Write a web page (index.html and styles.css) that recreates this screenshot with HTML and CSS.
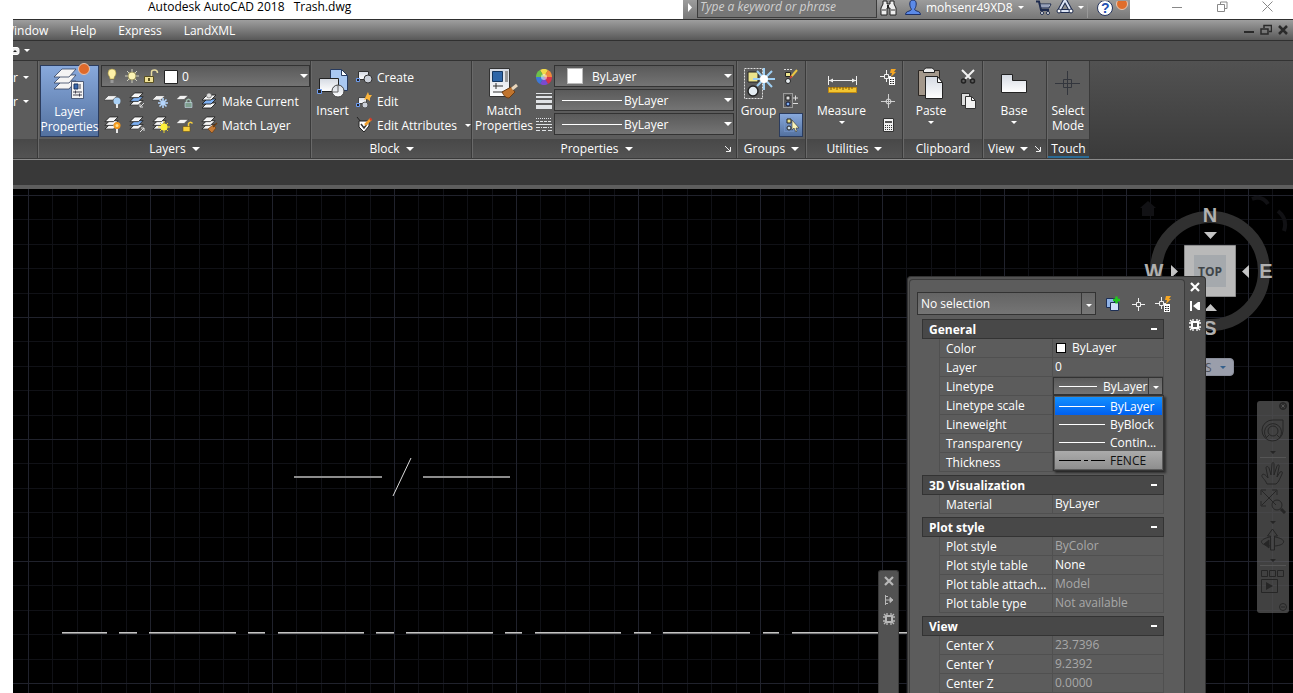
FILE: index.html
```html
<!DOCTYPE html>
<html lang="en">
  <head>
    <meta charset="UTF-8" />
    <meta name="viewport" content="width=device-width, initial-scale=1.0" />
    <title>Autodesk AutoCAD 2018 - Trash.dwg</title>
    <link rel="stylesheet" href="styles.css" />
  </head>
  <body>
    <!-- Shared icon shapes -->
    <svg class="defs" aria-hidden="true">
      <defs>
        <linearGradient id="silver" x1="0" y1="0" x2="0" y2="1">
          <stop offset="0" stop-color="#d4d9e2" />
          <stop offset="1" stop-color="#ffffff" />
        </linearGradient>
        <symbol id="sheet" viewBox="0 0 16 16">
          <path d="M5 3h10l-5 5H0z" fill="#f2f2f2" stroke="#333" stroke-width=".6" />
        </symbol>
        <symbol id="sheets" viewBox="0 0 16 16">
          <g fill="#f6f6f6" stroke="#222" stroke-width=".9">
            <path d="M6 9h9l-5 5H1z" />
            <path d="M6 5h9l-5 5H1z" />
            <path d="M6 1h9l-5 5H1z" />
          </g>
        </symbol>
        <symbol id="sheets-blue" viewBox="0 0 16 16">
          <g fill="#f6f6f6" stroke="#222" stroke-width=".9">
            <path d="M6 9h9l-5 5H1z" />
            <path d="M6 5h9l-5 5H1z" fill="#7db0f2" />
            <path d="M6 1h9l-5 5H1z" />
          </g>
        </symbol>
        <symbol id="gear" viewBox="0 0 12 12">
          <path d="M3 3h6v6H3z" fill="none" stroke="currentColor" stroke-width="2" />
          <path d="M4 0v3M8 0v3M4 9v3M8 9v3M0 4h3M0 8h3M9 4h3M9 8h3M1 1l2 2M9 9l2 2M11 1L9 3M3 9l-2 2" stroke="currentColor" stroke-width="1.300" />
        </symbol>
        <symbol id="close" viewBox="0 0 12 12">
          <path d="M2 2l8 8M10 2l-8 8" stroke="currentColor" stroke-width="2.200" />
        </symbol>
        <symbol id="crosshair" viewBox="0 0 16 16">
          <path d="M8.500 2v4M8.500 11v4M2 8.500h4M11 8.500h4M6.500 6.500h4v4h-4z" fill="none" stroke="#f0f0f0" />
        </symbol>
        <symbol id="quick-select" viewBox="0 0 16 16">
          <path d="M6.500 1v4M6.500 9v4M0 7.500h4M8 7.500h3M4.500 5.500h4v4h-4z" fill="none" stroke="#f0f0f0" />
          <path d="M11 0h5l-2 3h2l-5 5 1-4h-2z" fill="#f5a623" />
          <path d="M9 8h6v8H9z" fill="#fff" />
          <path d="M10 10.500h1.500M12.500 10.500h1.500M10 12.500h1.500M12.500 12.500h1.500M10 14.500h1.500M12.500 14.500h1.500" stroke="#222" />
        </symbol>
      </defs>
    </svg>

    <header class="titlebar">
      <h1 class="title">Autodesk AutoCAD 2018 <span>Trash.dwg</span></h1>
      <div class="infocenter">
        <button class="search-toggle" aria-label="Collapse search">
          <svg width="6" height="9" viewBox="0 0 6 9"><path d="M1 0v9l4-4.500z" fill="#fff" /></svg>
        </button>
        <input class="search" type="text" placeholder="Type a keyword or phrase" aria-label="Search help" />
        <button class="info-btn" aria-label="Search">
          <svg width="18" height="16" viewBox="0 0 18 16">
            <path d="M3 1h4v3h3V1h4v3l2 4v7h-6V8H7v7H1V8l2-4z" fill="#eee" stroke="#222" />
            <path d="M2 10h4M11 10h4" stroke="#333" />
            <path d="M8 5v3" stroke="#222" stroke-width="2" />
          </svg>
        </button>
        <button class="info-btn user">
          <svg width="16" height="16" viewBox="0 0 16 16">
            <path d="M0.500 14.500c0-3 3-3 5-4 1-.5 1-1.500 0-3C4.500 5 4 0 8 0s3.500 5 2.500 7.500c-1 1.500-1 2.500 0 3 2 1 5 1 5 4z" fill="#5b8ae8" stroke="#1c2f66" />
          </svg>
          mohsenr49XD8<i class="caret small"></i>
        </button>
        <button class="info-btn" aria-label="App Store">
          <svg width="17" height="16" viewBox="0 0 17 16">
            <path d="M1 1.500h3l2 8.500h8" fill="none" stroke="#1d2a4d" stroke-width="2" />
            <path d="M5 4h11l-2 4H6z" fill="#dce4f4" stroke="#1d2a4d" />
            <path d="M7 5v3M9 5v3M11 5v3M13 5v3" stroke="#1d2a4d" stroke-width=".7" />
            <circle cx="7" cy="13" r="1.500" fill="#fff" stroke="#1d2a4d" />
            <circle cx="13" cy="13" r="1.500" fill="#fff" stroke="#1d2a4d" />
          </svg>
        </button>
        <button class="info-btn connect" aria-label="Connect">
          <svg width="18" height="16" viewBox="0 0 18 16">
            <path d="M9 0L3 11M9 0l6 11M3 11h12" stroke="#1d2a4d" stroke-width="4" fill="none" />
            <path d="M9 0L3 11M9 0l6 11M3 11h12" stroke="#dce4f4" stroke-width="2" fill="none" />
            <circle cx="3" cy="11" r="2" fill="#fff" stroke="#1d2a4d" />
            <circle cx="15" cy="11" r="2" fill="#fff" stroke="#1d2a4d" />
          </svg>
          <i class="caret small"></i>
        </button>
        <button class="info-btn help" aria-label="Help">
          <svg width="32" height="16" viewBox="0 0 32 16">
            <circle cx="8" cy="7" r="7.500" fill="#fff" stroke="#25355f" />
            <text x="4" y="12" class="help-mark">?</text>
            <circle cx="25" cy="3" r="5.500" fill="#df6d2c" stroke="#e8c8b4" />
          </svg>
        </button>
      </div>
      <div class="window-controls">
        <button aria-label="Minimize"><svg width="11" height="11"><path d="M0 6.500h10" stroke="#888" /></svg></button>
        <button aria-label="Restore"><svg width="11" height="11"><path d="M.5 3.500h7v7h-7zM3.500 3V1h6.500v6.500H8" fill="none" stroke="#888" /></svg></button>
        <button aria-label="Close"><svg width="11" height="11"><path d="M.5 .5l10 10M10.500 .5l-10 10" stroke="#888" /></svg></button>
      </div>
    </header>

    <nav class="menubar">
      <a href="#">Window</a>
      <a href="#">Help</a>
      <a href="#">Express</a>
      <a href="#">LandXML</a>
      <div class="doc-controls">
        <button aria-label="Minimize drawing"><svg width="12" height="12"><path d="M1 8h10" stroke="#2a2a2a" stroke-width="2" /></svg></button>
        <button aria-label="Restore drawing"><svg width="12" height="12"><path d="M1 5h7v5H1zM4 4V1.500h7.500v6H9" fill="none" stroke="#2a2a2a" stroke-width="1.500" /></svg></button>
        <button aria-label="Close drawing"><svg width="12" height="12"><path d="M2 2l8 8M10 2l-8 8" stroke="#2a2a2a" stroke-width="2.500" /></svg></button>
      </div>
    </nav>

    <div class="tabbar">
      <button aria-label="Ribbon display options">
        <svg width="7" height="8"><path d="M0 .5h4q2 0 2 2v3q0 2-2 2H0" fill="#eee" stroke="#fff" /><path d="M0 5l2-2 2 2z" fill="#222" /></svg>
        <i class="caret small"></i>
      </button>
    </div>

    <div class="ribbon">
      <section class="panel panel-modify">
        <div class="panel-body rows">
          <button class="row">r <i class="caret small"></i></button>
          <button class="row">er <i class="caret small"></i></button>
        </div>
        <h2></h2>
      </section>

      <section class="panel panel-layers">
        <div class="panel-body">
          <button class="big active layer-props">
            <svg width="34" height="34" viewBox="0 0 34 34">
              <g fill="#f4f4f4" stroke="#33415f" stroke-width=".8">
                <path d="M9 14h14l-7 8H1z" /><path d="M9 8h14l-7 8H1z" /><path d="M9 2h14l-7 8H1z" />
                <path d="M18.500 14.500h12v17h-12z" />
              </g>
              <path d="M21 17h4v5h-4z" fill="#3767ad" stroke="#1c355e" />
              <path d="M27 17v5M20 25h9M20 28h9" stroke="#445" />
              <path d="M22.500 23.500v3M26.500 26.500v3" stroke="#445" />
            </svg>
            <span>Layer<br />Properties</span>
            <i class="dot"></i>
          </button>
          <div class="rows layer-rows">
            <div class="combo layer-combo">
              <select aria-label="Layer"><option>0</option></select>
              <span class="sample">
                <svg width="72" height="16" viewBox="0 0 72 16">
                  <path d="M6 1a4 4 0 0 1 4 4c0 3-2 3-2 6H4c0-3-2-3-2-6a4 4 0 0 1 4-4z" fill="#fdf0a8" stroke="#a8963c" stroke-width=".6" />
                  <path d="M4.500 12h3v3h-3z" fill="#9a9a9a" />
                  <path d="M26 1v14M19 8h14M21 3l10 10M31 3L21 13" stroke="#d0d0c0" />
                  <circle cx="26" cy="8" r="4" fill="#fbf3b4" stroke="#9a9360" />
                  <path d="M45.500 8V4q0-2 3-2t3 3" fill="none" stroke="#e8dca0" stroke-width="1.500" />
                  <path d="M38.500 8.500h9v6h-9z" fill="#f0e296" stroke="#5a5020" />
                  <path d="M43 10v3" stroke="#5a5020" stroke-width="2" />
                  <path d="M58.500 2.500h13v13h-13z" fill="#fff" stroke="#222" />
                </svg>
              </span>
            </div>
            <div class="row icons">
              <button aria-label="Off"><svg width="18" height="18" viewBox="0 0 18 18"><use href="#sheet" width="14" height="14" y="1" /><circle cx="13" cy="9" r="3.500" fill="#a9d0f5" /><path d="M12 12h2v4h-2z" fill="#e8e8e8" /></svg></button>
              <button aria-label="Isolate"><svg width="18" height="18" viewBox="0 0 18 18"><use href="#sheets-blue" width="15" height="15" x="1" /><path d="M16 11l-4 4M12 12v3h3" stroke="#ddd" fill="none" /></svg></button>
              <button aria-label="Freeze"><svg width="18" height="18" viewBox="0 0 18 18"><use href="#sheet" width="14" height="14" y="1" /><path d="M11 6v10M6 11h10M7.500 7.500l7 7M14.500 7.500l-7 7" stroke="#b5d5fb" stroke-width="1.600" /></svg></button>
              <button aria-label="Lock"><svg width="18" height="18" viewBox="0 0 18 18"><use href="#sheet" width="13" height="13" y="1" /><path d="M10.500 11V8.500q2-2.500 4 0V11" fill="none" stroke="#9ab8a8" stroke-width="1.500" /><path d="M9 10.500h7v5H9z" fill="#7f9f8f" stroke="#cde" stroke-width=".6" /></svg></button>
              <button class="text"><svg width="18" height="18" viewBox="0 0 18 18"><use href="#sheets-blue" width="16" height="16" x="1" y="2" /><circle cx="9" cy="3.500" r="2.500" fill="#ddd" stroke="#555" stroke-width=".6" /></svg>Make Current</button>
            </div>
            <div class="row icons">
              <button aria-label="Turn all layers on"><svg width="18" height="18" viewBox="0 0 18 18"><use href="#sheets" width="15" height="15" /><circle cx="13" cy="9.500" r="3.500" fill="#f79a1e" /><circle cx="13" cy="9.500" r="1.500" fill="#fde08a" /><path d="M12 13h2v4h-2z" fill="#e8e8e8" /></svg></button>
              <button aria-label="Unisolate"><svg width="18" height="18" viewBox="0 0 18 18"><use href="#sheets-blue" width="15" height="15" x="1" /><path d="M12 16l4-4M13 12h3v3" stroke="#ddd" fill="none" /></svg></button>
              <button aria-label="Thaw all layers"><svg width="18" height="18" viewBox="0 0 18 18"><use href="#sheets" width="15" height="15" /><path d="M12 5v12M6 11h12M8 7l8 8M16 7l-8 8" stroke="#e8cf2d" /><circle cx="12" cy="11" r="3.500" fill="#fdf03a" /></svg></button>
              <button aria-label="Unlock"><svg width="18" height="18" viewBox="0 0 18 18"><use href="#sheet" width="13" height="13" y="1" /><path d="M12.500 11V7.500q2-2.500 4 0" fill="none" stroke="#f6cf3c" stroke-width="1.500" /><path d="M7 10.500h7v5H7z" fill="#f6cf3c" stroke="#6d5410" stroke-width=".6" /></svg></button>
              <button class="text"><svg width="18" height="18" viewBox="0 0 18 18"><use href="#sheets" width="15" height="15" x="1" /><path d="M8 13l5-4 3 3-4 5z" fill="#c77b35" stroke="#6b3c12" stroke-width=".7" /><path d="M13 11l4-4" stroke="#6b3c12" stroke-width="1.500" /></svg>Match Layer</button>
            </div>
          </div>
        </div>
        <h2>Layers <i class="caret"></i></h2>
      </section>

      <section class="panel panel-block">
        <div class="panel-body">
          <button class="big insert">
            <svg width="34" height="32" viewBox="0 0 34 32">
              <path d="M14.500 2.500h11l6 6v15h-17z" fill="#a9c8f2" stroke="#273a5e" />
              <path d="M25.500 2.500v6h6z" fill="#fff" stroke="#273a5e" />
              <path d="M3.500 11.500h19v13h-19z" fill="url(#silver)" stroke="#222" />
              <circle cx="22" cy="24" r="6" fill="url(#silver)" stroke="#444" />
              <path d="M22 18v7h-6" fill="none" stroke="#666" />
              <path d="M1.500 22.500h4v4h-4z" fill="#222" stroke="#6f9df0" />
            </svg>
            <span>Insert</span>
          </button>
          <div class="rows block-rows">
            <button class="row"><svg width="18" height="18" viewBox="0 0 18 18"><path d="M3.500 3.500h10v8h-10z" fill="url(#silver)" stroke="#333" /><circle cx="13" cy="11" r="4" fill="#ccd1da" stroke="#333" /><path d="M1.500 10.500h3v3h-3z" fill="#222" stroke="#6f9df0" /></svg>Create</button>
            <button class="row"><svg width="18" height="18" viewBox="0 0 18 18"><path d="M3.500 5.500h8v6h-8z" fill="url(#silver)" stroke="#444" /><circle cx="10" cy="13" r="3" fill="#ccd1da" stroke="#555" /><path d="M1.500 11.500h3v3h-3z" fill="#222" stroke="#6f9df0" /><path d="M13 0l1 3 3 0-2 3 0 3-3-2-3 1 2-4z" fill="#fbb43a" /></svg>Edit</button>
            <button class="row"><svg width="18" height="18" viewBox="0 0 18 18"><path d="M2 1l4 5" stroke="#222" /><path d="M4 5h10v5l-5 6-5-5z" fill="#fff" stroke="#222" /><path d="M6 8l3 4 3-4" stroke="#333" fill="none" stroke-width="1.500" /><path d="M10 9l6-6" stroke="#f2a02c" stroke-width="2.500" /><path d="M15 4l1.500-1.500" stroke="#d23b2a" stroke-width="2.500" /></svg>Edit Attributes <i class="caret small"></i></button>
          </div>
        </div>
        <h2>Block <i class="caret"></i></h2>
      </section>

      <section class="panel panel-props">
        <div class="panel-body">
          <button class="big match">
            <svg width="34" height="32" viewBox="0 0 34 32">
              <path d="M2.500 1.500h20v28h-20z" fill="url(#silver)" stroke="#333" />
              <path d="M5.500 4.500h10v10h-10z" fill="#2f66a8" stroke="#15365f" />
              <path d="M18 4h3v11h-3z" fill="#999" />
              <path d="M6 19h10M9 16v6M6 25h12" stroke="#333" />
              <path d="M15 25l9-5 4 5-6 6c-3 0-5-2-7-6z" fill="#c0742e" stroke="#6b3c12" />
              <path d="M25 22l5-4" stroke="#e8d6bc" stroke-width="3" />
            </svg>
            <span>Match<br />Properties</span>
          </button>
          <div class="rows prop-icons">
            <button class="row" aria-label="Object color">
              <svg width="16" height="16" viewBox="0 0 16 16">
                <path d="M8 8L4 1a8 8 0 0 1 8 0z" fill="#f2d94a" />
                <path d="M8 8l4-7a8 8 0 0 1 4 7z" fill="#f08a3c" />
                <path d="M8 8h8a8 8 0 0 1-4 7z" fill="#d8344a" />
                <path d="M8 8l4 7a8 8 0 0 1-8 0z" fill="#7a4bd0" />
                <path d="M8 8l-4 7a8 8 0 0 1-4-7z" fill="#3c78d8" />
                <path d="M8 8H0a8 8 0 0 1 4-7z" fill="#6cc04a" />
                <circle cx="8" cy="8" r="3" fill="#fff" opacity=".5" />
              </svg>
            </button>
            <button class="row" aria-label="Lineweight"><svg width="16" height="16"><path d="M0 0h16v1H0zM0 3h16v2H0zM0 7h16v3H0zM0 12h16v4H0z" fill="#e0e3e6" /></svg></button>
            <button class="row" aria-label="Linetype"><svg width="16" height="16"><g stroke="#e0e3e6"><path d="M0 1.500h16" stroke-dasharray="1 1" /><path d="M0 4.500h16" stroke-dasharray="3 1" /><path d="M0 7.500h16" /><path d="M0 10.500h16" stroke-dasharray="4 1 1 1" /><path d="M0 13.500h16" stroke-dasharray="4 2" /></g></svg></button>
          </div>
          <div class="rows prop-combos">
            <div class="combo color-combo">
              <select aria-label="Object color"><option>ByLayer</option></select>
              <span class="sample"><i class="swatch"></i></span>
            </div>
            <div class="combo line-combo">
              <select aria-label="Lineweight"><option>ByLayer</option></select>
              <span class="sample"><svg width="60" height="1"><path d="M0 .5h60" stroke="#fff" /></svg></span>
            </div>
            <div class="combo line-combo">
              <select aria-label="Linetype"><option>ByLayer</option></select>
              <span class="sample"><svg width="60" height="1"><path d="M0 .5h60" stroke="#fff" /></svg></span>
            </div>
          </div>
        </div>
        <h2>Properties <i class="caret"></i><button class="launcher" aria-label="Properties palette"><svg width="6" height="6"><path d="M0 0l5 5M5.500 1v4.500H1" fill="none" stroke="#eee" /></svg></button></h2>
      </section>

      <section class="panel panel-groups">
        <div class="panel-body">
          <button class="big group">
            <svg width="34" height="34" viewBox="0 0 34 34">
              <path d="M2.500 2.500h18v30h-18z" fill="none" stroke="#ddd" stroke-dasharray="2 1" />
              <path d="M6 6h10v10H6z" fill="#ece48c" stroke="#222" />
              <circle cx="11" cy="25" r="5" fill="#e4ecf2" stroke="#222" stroke-width="1.500" />
              <path d="M22 2v22M11 13h22M15 5l15 16M30 5L15 20" stroke="#9fd0f5" stroke-width="2" />
              <circle cx="22" cy="13" r="4" fill="#fff" />
            </svg>
            <span>Group</span>
          </button>
          <div class="rows group-icons">
            <button class="row" aria-label="Ungroup"><svg width="18" height="18" viewBox="0 0 18 18"><path d="M2 1.500h8" stroke="#ddd" stroke-dasharray="2 1" /><path d="M3.500 4.500h5v4h-5z" fill="#ece48c" stroke="#222" /><circle cx="6" cy="13" r="2.500" fill="#e8eef2" stroke="#222" /><path d="M9 9l6-7" stroke="#eac644" stroke-width="2" /><path d="M8 10l2-2" stroke="#c33" stroke-width="1.500" /></svg></button>
            <button class="row" aria-label="Group edit"><svg width="18" height="18" viewBox="0 0 18 18"><path d="M1.500 1.500h9v14h-9z" fill="none" stroke="#ddd" stroke-dasharray="1 1" /><path d="M4 4h4v4H4z" fill="#ddd" stroke="#222" /><circle cx="6" cy="12" r="2" fill="#7db1f2" stroke="#113" /><path d="M11 6h5M13.500 3.500v5M11 11.500h5" stroke="#ddd" /></svg></button>
            <button class="row active" aria-label="Group selection"><svg width="18" height="18" viewBox="0 0 18 18"><path d="M1.500 1.500h9v14h-9z" fill="none" stroke="#7b9bd0" stroke-dasharray="1 1" /><path d="M4 3h4v4H4z" fill="#ece48c" stroke="#222" /><circle cx="6" cy="12" r="2" fill="#cfe0ea" stroke="#222" /><path d="M9 4v10l2-2 2 4 1-1-1-3h3z" fill="#faf3b8" stroke="#333" stroke-width=".6" /></svg></button>
          </div>
        </div>
        <h2>Groups <i class="caret"></i></h2>
      </section>

      <section class="panel panel-utils">
        <div class="panel-body">
          <button class="big measure">
            <svg width="32" height="32" viewBox="0 0 32 32">
              <path d="M2.500 9v9M30.500 9v9M3 13.500h27" stroke="#eee" />
              <path d="M3 13.500l4-2v4zM30 13.500l-4-2v4z" fill="#eee" />
              <path d="M2.500 20.500h28v5h-28z" fill="#f2c530" stroke="#c08a12" />
              <path d="M5 20v3M8 20v2M11 20v3M14 20v2M17 20v3M20 20v2M23 20v3M26 20v2" stroke="#7a5608" />
            </svg>
            <span>Measure</span><i class="caret small"></i>
          </button>
          <div class="rows util-icons">
            <button class="row" aria-label="Quick select"><svg width="16" height="16"><use href="#quick-select" /></svg></button>
            <button class="row" aria-label="Select all"><svg width="16" height="16" viewBox="0 0 16 16"><path d="M8.500 1v14M1 8.500h14" stroke="#ccc" /><circle cx="8.500" cy="8.500" r="2.500" fill="none" stroke="#ddd" /></svg></button>
            <button class="row" aria-label="Quick calculator"><svg width="16" height="16" viewBox="0 0 16 16"><path d="M3.500 1.500h10v13h-10z" fill="#f0f0f0" stroke="#333" /><path d="M5 4h7v2H5z" fill="#555" /><path d="M5 8.500h7M5 10.500h7M5 12.500h7" stroke="#333" stroke-dasharray="1 1" /></svg></button>
          </div>
        </div>
        <h2>Utilities <i class="caret"></i></h2>
      </section>

      <section class="panel panel-clip">
        <div class="panel-body">
          <button class="big paste">
            <svg width="32" height="32" viewBox="0 0 32 32">
              <path d="M3.500 3.500h21v25h-21z" fill="#a3978a" stroke="#2c2723" />
              <path d="M8.500 5.500V3q2-2 3-2h5q1 0 3 2v2.500z" fill="#eee" stroke="#222" />
              <path d="M10.500 9.500h12l5 6v16h-17z" fill="url(#silver)" stroke="#222" />
              <path d="M22.500 9.500v6h5z" fill="#fff" stroke="#222" />
            </svg>
            <span>Paste</span><i class="caret small"></i>
          </button>
          <div class="rows clip-icons">
            <button class="row" aria-label="Cut"><svg width="18" height="18" viewBox="0 0 18 18"><path d="M3 2l9 9M15 2l-9 9" stroke="#f2f2f2" stroke-width="2" /><circle cx="4.500" cy="13" r="2" fill="none" stroke="#222" stroke-width="1.500" /><circle cx="13.500" cy="13" r="2" fill="none" stroke="#222" stroke-width="1.500" /></svg></button>
            <button class="row" aria-label="Copy"><svg width="18" height="18" viewBox="0 0 18 18"><path d="M2.500 1.500h8v12h-8z" fill="#ddd" stroke="#333" /><path d="M6.500 4.500h6l4 4v8h-10z" fill="#f4f4f4" stroke="#333" /><path d="M12.500 4.500v4h4" fill="none" stroke="#333" /></svg></button>
          </div>
        </div>
        <h2>Clipboard</h2>
      </section>

      <section class="panel panel-view">
        <div class="panel-body">
          <button class="big base">
            <svg width="32" height="32" viewBox="0 0 32 32"><path d="M3.500 7.500h11v6h14v12h-25z" fill="url(#silver)" stroke="#222" /></svg>
            <span>Base</span><i class="caret small"></i>
          </button>
        </div>
        <h2>View <i class="caret"></i><button class="launcher" aria-label="View settings"><svg width="6" height="6"><path d="M0 0l5 5M5.500 1v4.500H1" fill="none" stroke="#eee" /></svg></button></h2>
      </section>

      <section class="panel panel-touch">
        <div class="panel-body">
          <button class="big select-mode">
            <svg width="32" height="32" viewBox="0 0 32 32"><path d="M15.500 4v24M3 16.500h25M11.500 12.500h8v8h-8z" fill="none" stroke="#33363d" /></svg>
            <span>Select<br />Mode</span>
          </button>
        </div>
        <h2>Touch</h2>
      </section>
    </div>

    <div class="file-tabs"></div>

    <main class="canvas">
      <svg class="drawing" width="100%" height="100%">
        <defs>
          <pattern id="grid" x="15" y="6" width="122" height="122" patternUnits="userSpaceOnUse">
            <path d="M24.500 0v122M49.500 0v122M73.500 0v122M98.500 0v122M0 24.500h122M0 49.500h122M0 73.500h122M0 98.500h122" stroke="#101116" />
            <path d="M.5 0v122M0 .5h122" stroke="#20222c" />
          </pattern>
        </defs>
        <rect width="100%" height="100%" fill="url(#grid)" />
        <path d="M281 288h88M410 288h87" stroke="#8c8c8c" stroke-width="2" />
        <path d="M398 269l-18 38" stroke="#dcdcdc" />
        <path d="M49 443.500h45M106 443.500h18M136 443.500h87M235 443.500h17M265 443.500h86M363 443.500h18M393 443.500h87M492 443.500h17M522 443.500h86M621 443.500h17M650 443.500h87M750 443.500h16M779 443.500h120" stroke="#c4c4c4" />
        <path d="M49 444.500h45M106 444.500h18M136 444.500h87M235 444.500h17M265 444.500h86M363 444.500h18M393 444.500h87M492 444.500h17M522 444.500h86M621 444.500h17M650 444.500h87M750 444.500h16M779 444.500h120" stroke="#777" />
      </svg>

      <div class="viewcube">
        <svg width="160" height="160" viewBox="0 0 160 160">
          <path d="M7 19l8-7 8 7h-2v8H9v-8z" fill="#121215" />
          <path d="M119 10q10-4 16 5M145 22q10 8 6 20" fill="none" stroke="#111114" stroke-width="4" />
          <circle cx="77" cy="82" r="54" fill="none" stroke="#303030" stroke-width="12" />
          <path d="M51.500 56.500h51v51h-51z" fill="#b9b9b9" stroke="#8c8c8c" />
          <path d="M61 66h32v32H61z" fill="#a5a9ad" />
          <text x="77" y="87" class="cube-face">TOP</text>
          <g class="compass">
            <text x="77" y="33">N</text>
            <text x="77" y="146">S</text>
            <text x="21" y="89">W</text>
            <text x="133" y="89">E</text>
          </g>
          <path d="M71 43h13l-6.500 7zM71 122h13l-6.500-7zM38 76v13l7-6.500zM116 76v13l-7-6.500z" fill="#c4c4c4" />
        </svg>
        <button class="ucs">WCS <i class="caret small"></i></button>
      </div>

      <div class="navbar">
        <svg width="32" height="212" viewBox="0 0 32 212" fill="none" stroke="#262626">
          <circle cx="26" cy="5" r="3.500" fill="#2c2c2c" />
          <path d="M24.500 3.500l3 3M27.500 3.500l-3 3" stroke="#555" />
          <path d="M16 19h10v11a10.500 10.500 0 1 1-10-11z" />
          <circle cx="16" cy="30" r="5" /><path d="M9 36a8.500 8.500 0 1 1 14 0M12 34l-3 3M20 34l3 3" />
          <path d="M3 56.500h26M3 164.500h26" stroke="#555" />
          <path d="M10 83c-2-5-6-7-5-9s4 0 6 3l-2-10c0-2 2-2 3 0l2 7 1-11c0-2 2-2 2 0v11l3-9c1-2 3-1 2 1l-2 10 3-5c2-1 3 0 2 2-2 4-3 8-6 10z" />
          <path d="M5 90l14 14M19 90L5 104M4 94v-5h5M15 89h5v5M4 100v5h5" />
          <circle cx="20" cy="104" r="5" /><path d="M24 108l4 4" stroke-width="3" />
          <path d="M13.500 149v-14h-3l5-7 5 7h-3v14z" />
          <path d="M13 136c-11 2-12 8 1 9M18 136c12 2 11 8 0 9" /><path d="M7 143l5-4v8z" fill="#262626" />
          <path d="M4.500 169.500h6v6h-6zM12.500 169.500h6v6h-6zM20.500 169.500h6v6h-6zM4.500 178.500h16v13h-16z" />
          <path d="M9 181v8l7-4zM13 50h6l-3 3zM13 120h6l-3 3zM13 158h6l-3 3z" fill="#262626" stroke="none" />
          <circle cx="26" cy="206" r="3.500" /><path d="M24 206h4" />
        </svg>
      </div>

      <aside class="palette-min">
        <button aria-label="Close"><svg width="12" height="12"><use href="#close" /></svg></button>
        <button aria-label="Auto-hide"><svg width="12" height="12" viewBox="0 0 12 12"><path d="M2.500 1v10M3 2.500h2M3 9.500h2" stroke="currentColor" fill="none" /><path d="M3 6h5M7 3.500v5l3-2.500z" stroke="currentColor" fill="currentColor" /></svg></button>
        <button aria-label="Palette properties"><svg width="12" height="12"><use href="#gear" /></svg></button>
      </aside>

      <aside class="palette">
        <div class="palette-content">
          <div class="palette-head">
            <div class="combo boxed selection-combo">
              <select aria-label="Selection"><option>No selection</option></select>
            </div>
            <button aria-label="Toggle pickadd"><svg width="16" height="16" viewBox="0 0 16 16"><path d="M1.500 2.500h8v9h-8z" fill="#8fb2e6" stroke="#1d2f55" /><path d="M5.500 6.500h8v8h-8z" fill="#cfe0f8" stroke="#1d2f55" /><path d="M8 4h7M11.500 .5v7" stroke="#1ec81e" stroke-width="2.500" /></svg></button>
            <button aria-label="Select objects"><svg width="16" height="16"><use href="#crosshair" /></svg></button>
            <button aria-label="Quick select"><svg width="16" height="16"><use href="#quick-select" /></svg></button>
          </div>

          <section class="category">
            <h3>General <button aria-label="Collapse General"></button></h3>
            <table>
              <tr><th>Color</th><td><i class="chip"></i>ByLayer</td></tr>
              <tr><th>Layer</th><td>0</td></tr>
              <tr>
                <th><label for="linetype">Linetype</label></th>
                <td class="editing">
                  <div class="combo boxed linetype-combo">
                    <select id="linetype"><option>ByLayer</option></select>
                    <span class="sample"><svg width="38" height="1"><path d="M0 .5h38" stroke="#fff" /></svg></span>
                  </div>
                  <ul class="options">
                    <li class="selected"><svg width="46" height="1"><path d="M0 .5h46" stroke="#fff" /></svg>ByLayer</li>
                    <li><svg width="46" height="1"><path d="M0 .5h46" stroke="#fff" /></svg>ByBlock</li>
                    <li><svg width="46" height="1"><path d="M0 .5h46" stroke="#fff" /></svg>Contin...</li>
                    <li class="hover"><svg width="46" height="1"><path d="M0 .5h22M25 .5h4M32 .5h14" stroke="#000" /></svg>FENCE</li>
                  </ul>
                </td>
              </tr>
              <tr><th>Linetype scale</th><td></td></tr>
              <tr><th>Lineweight</th><td></td></tr>
              <tr><th>Transparency</th><td></td></tr>
              <tr><th>Thickness</th><td></td></tr>
            </table>
          </section>

          <section class="category">
            <h3>3D Visualization <button aria-label="Collapse 3D Visualization"></button></h3>
            <table>
              <tr><th>Material</th><td>ByLayer</td></tr>
            </table>
          </section>

          <section class="category">
            <h3>Plot style <button aria-label="Collapse Plot style"></button></h3>
            <table>
              <tr><th>Plot style</th><td class="readonly">ByColor</td></tr>
              <tr><th>Plot style table</th><td>None</td></tr>
              <tr><th>Plot table attach...</th><td class="readonly">Model</td></tr>
              <tr><th>Plot table type</th><td class="readonly">Not available</td></tr>
            </table>
          </section>

          <section class="category">
            <h3>View <button aria-label="Collapse View"></button></h3>
            <table>
              <tr><th>Center X</th><td class="readonly">23.7396</td></tr>
              <tr><th>Center Y</th><td class="readonly">9.2392</td></tr>
              <tr><th>Center Z</th><td class="readonly">0.0000</td></tr>
            </table>
          </section>
        </div>
        <div class="palette-bar">
          <button aria-label="Close palette"><svg width="12" height="12"><use href="#close" /></svg></button>
          <button aria-label="Auto-hide palette"><svg width="12" height="12" viewBox="0 0 12 12"><path d="M2 1v10M10 2v8" stroke="#fff" stroke-width="2" /><path d="M4 6l5-4v8z" fill="#fff" /></svg></button>
          <button aria-label="Palette settings"><svg width="12" height="12"><use href="#gear" /></svg></button>
        </div>
      </aside>
    </main>
  </body>
</html>
```

FILE: styles.css
```css
* {
  box-sizing: border-box;
}
body {
  margin: 0;
  padding-left: 13px;
  height: 100vh;
  display: flex;
  flex-direction: column;
  overflow: hidden;
  background: #fff;
  color: #fff;
  font-family: "Open Sans", "Noto Sans", sans-serif;
  font-size: 12px;
}
.defs {
  position: absolute;
  width: 0;
  height: 0;
}
button,
select,
input {
  font: inherit;
  color: inherit;
}
button {
  display: flex;
  align-items: center;
  justify-content: center;
  margin: 0;
  padding: 0;
  border: 0;
  background: none;
  white-space: nowrap;
}
svg {
  display: block;
  flex: none;
}
.caret {
  display: inline-block;
  flex: none;
  border: 4px solid transparent;
  border-top-color: #fff;
  border-bottom: 0;
}
.caret.small {
  border-width: 3px;
  border-bottom: 0;
}

/* Title bar */
.titlebar {
  display: flex;
  flex: none;
  height: 19px;
}
.title {
  margin: 0 auto 0 135px;
  color: #000;
  font-size: 12px;
  font-weight: normal;
  line-height: 14px;
}
.title span {
  margin-left: 6px;
}
.infocenter {
  display: flex;
  align-items: flex-start;
  width: 447px;
  background: linear-gradient(#9c9c9c, #777);
}
.search-toggle {
  width: 14px;
  height: 14px;
}
.search {
  width: 180px;
  height: 18px;
  padding: 0 2px 4px;
  border: 1px solid #3c3c3c;
  border-top: 0;
  background: #767676;
}
.search::placeholder {
  color: #d0d0d0;
  font-style: italic;
}
.info-btn {
  height: 15px;
  margin-left: 3px;
  gap: 5px;
}
.info-btn.user {
  margin: 0 8px 0 7px;
}
.info-btn.connect {
  margin-left: 4px;
  gap: 4px;
}
.info-btn.help {
  height: 18px;
  margin: 0 0 0 auto;
  padding: 0 1px 0 9px;
  border-left: 1px solid #999;
}
.help-mark {
  fill: #2450b0;
  font-family: "Liberation Sans", sans-serif;
  font-size: 14px;
  font-weight: bold;
}
.window-controls {
  display: flex;
  gap: 34px;
  width: 163px;
  padding-left: 42px;
  height: 13px;
}

/* Menu bar */
.menubar {
  display: flex;
  flex: none;
  align-items: center;
  height: 22px;
  overflow: hidden;
  border-top: 1px solid #2f2f2f;
  border-bottom: 1px solid #303030;
  background: linear-gradient(#9e9e9e, #585858);
}
.menubar a {
  padding: 0 11px;
  color: #fff;
  text-decoration: none;
}
.menubar a:first-child {
  margin-left: -21px;
}
.doc-controls {
  display: flex;
  gap: 5px;
  margin-left: auto;
  padding-right: 4px;
}
.tabbar {
  display: flex;
  flex: none;
  height: 20px;
  border-bottom: 1px solid #333;
  background: #525252;
}
.tabbar button {
  gap: 4px;
}

/* Ribbon */
.ribbon {
  display: flex;
  flex: none;
  height: 99px;
  border-bottom: 1px solid #8a8a8a;
  background: linear-gradient(#525252, #3a3a3a);
}
.panel {
  position: relative;
  flex: none;
  height: 97px;
  border-right: 1px solid #3a3a3a;
  border-left: 1px solid #696969;
  background: #5c5c5c;
}
.panel-body {
  display: flex;
  height: 78px;
  padding-top: 4px;
}
.panel h2 {
  display: flex;
  align-items: center;
  justify-content: center;
  gap: 6px;
  height: 19px;
  margin: 0;
  background: linear-gradient(#484848, #535353);
  font-size: 12px;
  font-weight: normal;
}
.launcher {
  position: absolute;
  right: 5px;
  bottom: 6px;
}
.panel-modify {
  width: 25px;
  border-left: 0;
}
.panel-layers {
  width: 273px;
}
.panel-block {
  width: 161px;
}
.panel-props {
  width: 265px;
}
.panel-groups {
  width: 69px;
}
.panel-utils {
  width: 97px;
}
.panel-clip {
  width: 80px;
}
.panel-view {
  width: 64px;
}
.panel-touch {
  width: 43px;
}
.panel-props h2 {
  padding-right: 16px;
}
.panel-view h2 {
  justify-content: flex-start;
  padding-left: 4px;
}
.panel-touch h2 {
  background: #3f3f3f;
  box-shadow: inset 0 -2px #2a6a94;
}
.big {
  position: relative;
  flex-direction: column;
  justify-content: flex-start;
  height: 72px;
  padding-top: 1px;
  line-height: 15px;
}
.big svg {
  height: 34px;
}
.big span {
  margin-top: 3px;
}
.big .caret {
  margin-top: 3px;
}
.active {
  border: 1px solid #2b3c5e;
  background: linear-gradient(#88a9dc, #53719f);
}
.dot {
  position: absolute;
  top: -3px;
  right: 8px;
  width: 12px;
  height: 12px;
  border: 1px solid #e6c3ae;
  border-radius: 50%;
  background: #df6a2b;
}
.rows {
  display: flex;
  flex-direction: column;
}
.row {
  display: flex;
  align-items: center;
  justify-content: flex-start;
  gap: 4px;
  height: 24px;
}
.panel-modify .row {
  justify-content: flex-end;
  padding-right: 8px;
  gap: 5px;
}
.layer-props {
  width: 59px;
  margin-left: 1px;
}
.layer-rows {
  width: 209px;
  margin-left: 2px;
}
.icons {
  gap: 6px;
  padding-left: 3px;
}
.icons .text {
  gap: 4px;
}
.insert {
  width: 42px;
}
.block-rows {
  margin-left: 2px;
}
.block-rows .caret {
  margin-left: 4px;
}
.match {
  width: 62px;
}
.prop-icons {
  margin-left: 1px;
}
.prop-combos {
  width: 180px;
  margin-left: 2px;
}
.group {
  width: 41px;
}
.group-icons .row {
  width: 24px;
  padding-left: 3px;
}
.measure {
  width: 69px;
}
.util-icons {
  margin-left: 4px;
}
.paste {
  width: 54px;
}
.clip-icons {
  margin-left: 1px;
}
.base {
  width: 60px;
}
.select-mode {
  width: 40px;
}

/* Combo boxes */
.combo {
  position: relative;
  height: 24px;
}
.combo select {
  width: 100%;
  height: 22px;
  padding: 0 6px;
  border: 1px solid #333;
  border-radius: 0;
  background: linear-gradient(#5a5a5a, #747474);
  appearance: none;
}
.combo::after {
  content: "";
  position: absolute;
  top: 9px;
  right: 2px;
  border: 4px solid transparent;
  border-top-color: #fff;
  border-bottom: 0;
  pointer-events: none;
}
.sample {
  position: absolute;
  top: 0;
  left: 5px;
  display: flex;
  align-items: center;
  height: 22px;
  pointer-events: none;
}
.layer-combo select {
  padding-left: 80px;
}
.color-combo select {
  padding-left: 37px;
}
.color-combo .sample {
  left: 13px;
}
.line-combo select {
  padding-left: 69px;
}
.line-combo .sample {
  left: 8px;
}
.swatch {
  width: 16px;
  height: 16px;
  border: 1px solid #bbb;
  background: #fff;
}
.combo.boxed::after {
  top: 1px;
  right: 1px;
  bottom: 1px;
  width: 13px;
  border: 0;
  border-left: 1px solid #383838;
  background: linear-gradient(#666, #777);
}
.combo.boxed::before {
  content: "";
  position: absolute;
  z-index: 1;
  top: 50%;
  right: 4px;
  border: 3px solid transparent;
  border-top-color: #fff;
  border-bottom: 0;
  pointer-events: none;
}

.file-tabs {
  flex: none;
  height: 29px;
  border-bottom: 4px solid #5e5e5e;
  background: #393939;
}

/* Drawing area */
.canvas {
  position: relative;
  flex: 1;
  min-height: 0;
  overflow: hidden;
  background: #000;
}
.drawing {
  position: absolute;
  inset: 0;
}
.viewcube {
  position: absolute;
  top: 0;
  right: 0;
  width: 160px;
}
.compass text {
  fill: #b0b0b0;
  font-family: "Liberation Sans", sans-serif;
  font-size: 20px;
  font-weight: bold;
  text-anchor: middle;
}
.cube-face {
  fill: #3f4448;
  font-size: 12px;
  font-weight: bold;
  text-anchor: middle;
}
.ucs {
  gap: 8px;
  width: 56px;
  height: 18px;
  margin: 9px 0 0 45px;
  border: 1px solid #8a8e9a;
  border-radius: 4px;
  background: #9a9eab;
  color: #4d525c;
}
.ucs .caret {
  border-top-color: #35608c;
}
.navbar {
  position: absolute;
  top: 212px;
  right: 4px;
  border-radius: 3px;
  background: rgba(100, 100, 100, 0.65);
}
.palette-min {
  position: absolute;
  right: 394px;
  bottom: 0;
  width: 21px;
  height: 123px;
  padding-top: 4px;
  border: 1px solid #3a3a3a;
  border-bottom: 0;
  border-radius: 3px 3px 0 0;
  background: #525252;
  color: #b8b8b8;
}
.palette-min button,
.palette-bar button {
  width: 100%;
  height: 12px;
  margin-bottom: 7px;
}

/* Properties palette */
.palette {
  position: absolute;
  top: 87px;
  right: 87px;
  bottom: 0;
  display: flex;
  width: 299px;
  border: 1px solid #333;
  border-bottom: 0;
  border-radius: 4px 4px 0 0;
  background: #525252;
}
.palette-content {
  width: 276px;
  margin: 2px 0 0 1px;
  padding: 12px 20px 0 12px;
  border: 1px solid #3b3b3b;
  border-bottom: 0;
  border-radius: 4px 4px 0 0;
  background: #5c5c5c;
}
.palette-bar {
  flex: 1;
  padding-top: 4px;
}
.palette-head {
  display: flex;
  align-items: center;
  gap: 9px;
  width: 254px;
  height: 23px;
  margin: 0 0 4px -5px;
}
.selection-combo {
  width: 181px;
  height: 23px;
}
.selection-combo select {
  height: 23px;
  padding: 0 3px;
  background: linear-gradient(#646464, #757575);
}
.category {
  margin-bottom: 3px;
}
.category h3 {
  display: flex;
  align-items: center;
  justify-content: space-between;
  height: 20px;
  margin: 0;
  padding: 0 6px;
  border: 1px solid #333;
  background: #484848;
  font-size: 12px;
}
.category h3 button {
  width: 6px;
  height: 2px;
  background: #fff;
}
.category table {
  width: 225px;
  margin-left: 17px;
  border-spacing: 0;
  border-left: 1px solid #505050;
  border-right: 1px solid #505050;
  table-layout: fixed;
}
.category th,
.category td {
  height: 19px;
  padding: 1px 0 0 6px;
  border-bottom: 1px solid #505050;
  font-weight: normal;
  line-height: 17px;
  text-align: left;
  white-space: nowrap;
}
.category th {
  width: 112px;
}
.category td {
  padding: 0 0 1px 2px;
  border-left: 1px solid #505050;
}
.category td.readonly {
  color: #a8a8a8;
}
.category td.editing {
  position: relative;
  padding: 0;
}
.chip {
  display: inline-block;
  width: 10px;
  height: 10px;
  margin: 0 6px 0 1px;
  border: 1px solid #000;
  background: #fff;
  vertical-align: -1px;
}
.linetype-combo {
  height: 18px;
}
.linetype-combo select {
  display: block;
  height: 18px;
  padding: 0 0 0 49px;
}
.linetype-combo .sample {
  left: 6px;
  height: 18px;
}
.options {
  position: absolute;
  z-index: 2;
  top: 18px;
  left: 0;
  width: 111px;
  margin: 0;
  padding: 1px;
  border: 1px solid #333;
  background: #5c5c5c;
  box-shadow: 2px 2px 2px rgba(0, 0, 0, 0.5);
  list-style: none;
}
.options li {
  display: flex;
  align-items: center;
  gap: 5px;
  height: 18px;
  padding-left: 4px;
}
.options .selected {
  background: linear-gradient(#1290ff, #0060f0);
}
.options .hover {
  background: linear-gradient(#ababab, #8e8e8e);
  color: #111;
}
```
